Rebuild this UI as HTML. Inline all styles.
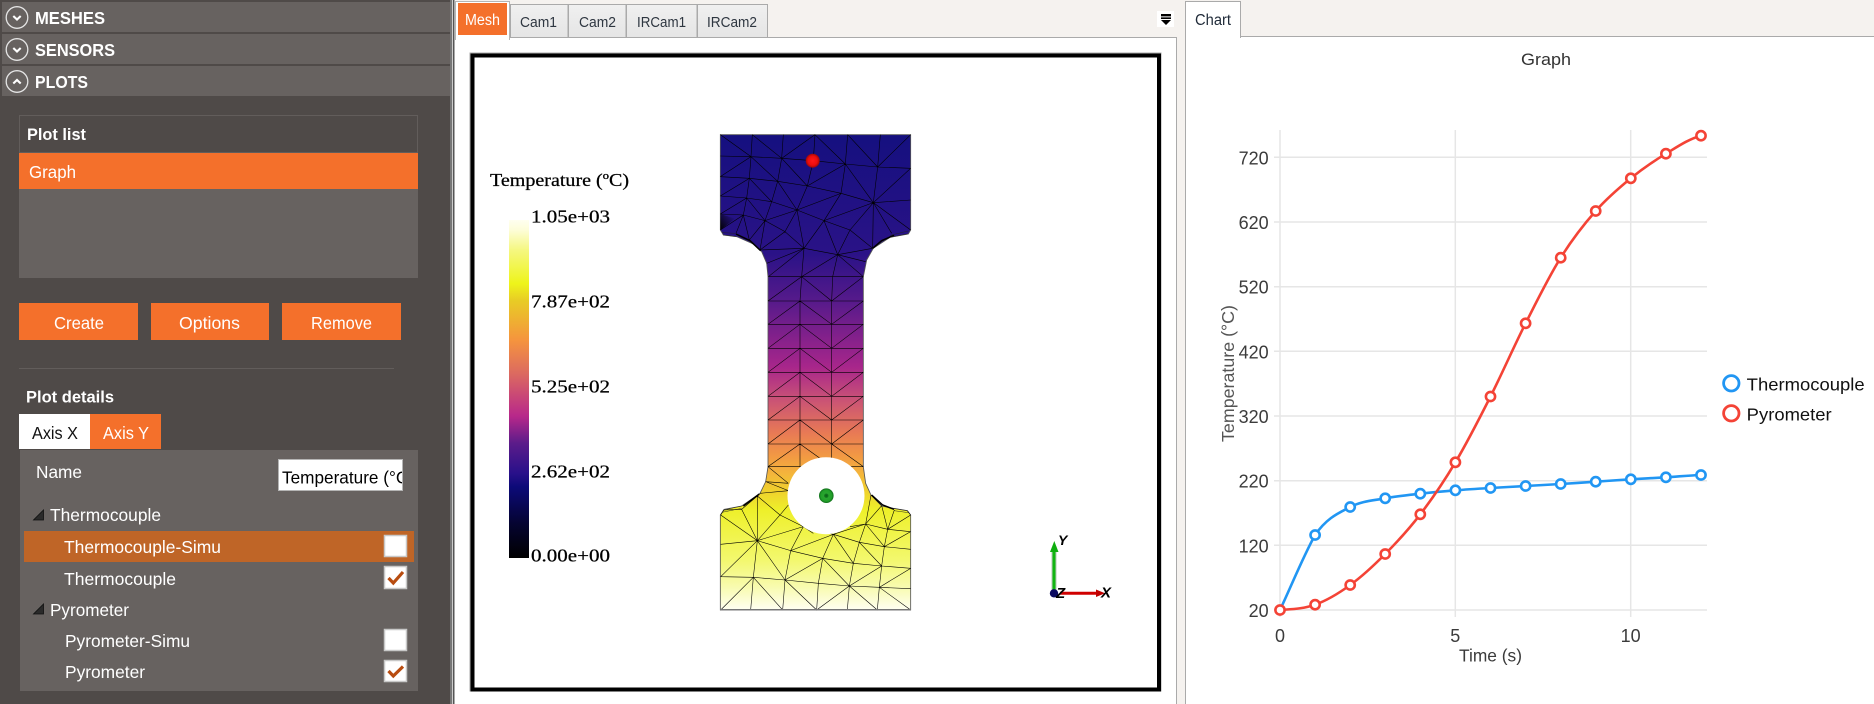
<!DOCTYPE html>
<html><head><meta charset="utf-8"><title>Plots</title>
<style>
html,body{margin:0;padding:0;background:#fff;width:1874px;height:704px;overflow:hidden}
svg{display:block}
text{font-family:"Liberation Sans",sans-serif}
.w{fill:#fff;font-size:17.5px}
.h{fill:#fff;font-size:17.5px;font-weight:bold}
.t{fill:#2e3640;font-size:15px}
.s{font-family:"Liberation Serif",serif;fill:#000;font-size:18px;stroke:#000;stroke-width:.25px}
.a{fill:#3b3b3b;font-size:18px}
</style></head><body>
<svg width="1874" height="704" viewBox="0 0 1874 704" xmlns="http://www.w3.org/2000/svg">
<defs>
<linearGradient id="mesh" gradientUnits="userSpaceOnUse" x1="0" y1="44" x2="0" y2="1470">
<stop offset="0" stop-color="#15107f"/><stop offset=".25" stop-color="#2a1287"/><stop offset=".348" stop-color="#551a8b"/><stop offset=".489" stop-color="#a8268b"/><stop offset=".552" stop-color="#c74f78"/><stop offset=".628" stop-color="#e87a55"/><stop offset=".678" stop-color="#f29a43"/><stop offset=".712" stop-color="#f4b43c"/><stop offset=".748" stop-color="#efcf2d"/><stop offset=".79" stop-color="#eef02a"/><stop offset=".895" stop-color="#f3f86e"/><stop offset=".952" stop-color="#f8fbb0"/><stop offset="1" stop-color="#fffff2"/>
</linearGradient>
<linearGradient id="cb" x1="0" y1="0" x2="0" y2="1">
<stop offset="0" stop-color="#fffff0"/><stop offset=".03" stop-color="#fdfdd8"/><stop offset=".09" stop-color="#f5f77f"/><stop offset=".188" stop-color="#eef41a"/><stop offset=".238" stop-color="#e8cc25"/><stop offset=".356" stop-color="#f5943e"/><stop offset=".454" stop-color="#dc6a60"/><stop offset=".58" stop-color="#b8288a"/><stop offset=".66" stop-color="#5c1c8a"/><stop offset=".75" stop-color="#28108a"/><stop offset=".79" stop-color="#0c0a78"/><stop offset=".9" stop-color="#050430"/><stop offset="1" stop-color="#000"/>
</linearGradient>
<linearGradient id="dk" gradientUnits="userSpaceOnUse" x1="61" y1="330" x2="105" y2="292">
<stop offset="0" stop-color="#000"/><stop offset="1" stop-color="#000" stop-opacity="0"/>
</linearGradient>
<linearGradient id="tb" x1="0" y1="0" x2="0" y2="1"><stop offset="0" stop-color="#f0f0f0"/><stop offset="1" stop-color="#e5e5e5"/></linearGradient>
<radialGradient id="rs"><stop offset="0" stop-color="#ff1818"/><stop offset=".65" stop-color="#ee0d0d"/><stop offset="1" stop-color="#9c0808"/></radialGradient>
<radialGradient id="gs"><stop offset="0" stop-color="#0c5a18"/><stop offset=".25" stop-color="#127a1e"/><stop offset=".35" stop-color="#2aa52f"/><stop offset=".75" stop-color="#22a02a"/><stop offset="1" stop-color="#0e6a18"/></radialGradient>
<clipPath id="ic"><rect x="279" y="460" width="123" height="30"/></clipPath>
</defs>

<!-- left panel -->
<rect x="0" y="0" width="450" height="704" fill="#4f4a48"/>
<rect x="2" y="2" width="448" height="30" fill="#676260"/>
<rect x="2" y="34" width="448" height="30" fill="#676260"/>
<rect x="2" y="66" width="448" height="30" fill="#676260"/>
<g fill="none" stroke="#e4e4e4" stroke-width="1.3">
<circle cx="17" cy="17.5" r="10.8"/><circle cx="17" cy="49.5" r="10.8"/><circle cx="17" cy="81.5" r="10.8"/>
</g>
<g fill="none" stroke="#fff" stroke-width="2.1">
<path d="M13.3 16L17 19.5L20.7 16"/><path d="M13.3 48L17 51.5L20.7 48"/><path d="M13.3 83.5L17 80L20.7 83.5"/>
</g>
<text class="h" x="35" y="24" textLength="70" lengthAdjust="spacingAndGlyphs">MESHES</text>
<text class="h" x="35" y="56" textLength="80" lengthAdjust="spacingAndGlyphs">SENSORS</text>
<text class="h" x="35" y="88" textLength="53" lengthAdjust="spacingAndGlyphs">PLOTS</text>

<rect x="19.5" y="115.5" width="398" height="37" fill="#4f4a48" stroke="#625d5b"/>
<text class="h" x="27" y="140" textLength="59" lengthAdjust="spacingAndGlyphs" style="font-size:17px">Plot list</text>
<rect x="19" y="153" width="399" height="125" fill="#676260"/>
<rect x="19" y="153" width="399" height="36" fill="#f4702b"/>
<text class="w" x="29" y="178" textLength="47" lengthAdjust="spacingAndGlyphs">Graph</text>
<rect x="19" y="303" width="119" height="37" fill="#f4702b"/>
<rect x="151" y="303" width="118" height="37" fill="#f4702b"/>
<rect x="282" y="303" width="119" height="37" fill="#f4702b"/>
<text class="w" x="54" y="329" textLength="50" lengthAdjust="spacingAndGlyphs">Create</text>
<text class="w" x="179" y="329" textLength="61" lengthAdjust="spacingAndGlyphs">Options</text>
<text class="w" x="311" y="329" textLength="61" lengthAdjust="spacingAndGlyphs">Remove</text>
<rect x="19" y="368" width="375" height="1" fill="#625d5b"/>
<text class="h" x="26" y="402.5" textLength="88" lengthAdjust="spacingAndGlyphs" style="font-size:17px">Plot details</text>
<rect x="19" y="414" width="71" height="35" fill="#fff"/>
<rect x="90" y="414" width="71" height="35" fill="#f4702b"/>
<text x="32" y="439" class="w" style="fill:#111" textLength="46" lengthAdjust="spacingAndGlyphs">Axis X</text>
<text x="103" y="439" class="w" textLength="46" lengthAdjust="spacingAndGlyphs">Axis Y</text>
<rect x="20" y="450" width="398" height="241" fill="#676260"/>
<text class="w" x="36" y="478" textLength="46" lengthAdjust="spacingAndGlyphs">Name</text>
<rect x="278.5" y="459.5" width="124" height="31" fill="#fff" stroke="#b5b5b5"/>
<g clip-path="url(#ic)"><text x="282" y="483.5" style="fill:#000;font-size:17.5px" textLength="132" lengthAdjust="spacingAndGlyphs">Temperature (°C)</text></g>
<path d="M33.5 520H43.5V510Z" fill="#2a2a2a" stroke="#111" stroke-width=".8"/>
<text class="w" x="50" y="521" textLength="111" lengthAdjust="spacingAndGlyphs">Thermocouple</text>
<rect x="24" y="531" width="390" height="31" fill="#bf6527"/>
<text class="w" x="64" y="553" textLength="157" lengthAdjust="spacingAndGlyphs">Thermocouple-Simu</text>
<text class="w" x="64" y="585" textLength="112" lengthAdjust="spacingAndGlyphs">Thermocouple</text>
<path d="M33.5 614H43.5V604Z" fill="#2a2a2a" stroke="#111" stroke-width=".8"/>
<text class="w" x="50" y="616" textLength="79" lengthAdjust="spacingAndGlyphs">Pyrometer</text>
<text class="w" x="65" y="647" textLength="125" lengthAdjust="spacingAndGlyphs">Pyrometer-Simu</text>
<text class="w" x="65" y="678" textLength="80" lengthAdjust="spacingAndGlyphs">Pyrometer</text>
<g fill="#fff" stroke="#c8c8c8" stroke-width="1.5">
<rect x="384.5" y="535.5" width="22" height="21"/><rect x="384.5" y="566.5" width="22" height="22"/>
<rect x="384.5" y="629.5" width="22" height="21"/><rect x="384.5" y="660.5" width="22" height="21"/>
</g>
<g fill="none" stroke="#b84c10" stroke-width="3.2">
<path d="M388.5 578L393.3 583L403 572"/><path d="M388.5 671L393.3 676L403 666.5"/>
</g>
<!-- splitter -->
<rect x="450" y="0" width="2" height="704" fill="#777"/><rect x="452" y="0" width="1" height="704" fill="#ccc"/><rect x="453" y="0" width="1" height="704" fill="#555"/><rect x="454" y="0" width="1" height="704" fill="#aaa"/>

<!-- center -->
<rect x="455" y="0" width="731" height="37" fill="#f5f2ef"/>
<rect x="455" y="37" width="721" height="667" fill="#fff"/>
<rect x="1177" y="37" width="9" height="667" fill="#f5f2ef"/>
<rect x="509" y="37" width="668" height="1" fill="#aaa"/>
<rect x="1176" y="37" width="1" height="667" fill="#aaa"/>
<path d="M455.5 40V1.5H509.5V40" fill="#fff" stroke="#b5b5b5"/>
<rect x="458" y="3" width="49" height="32" fill="#f4702b"/>
<text x="465" y="25" style="fill:#fff;font-size:15.5px" textLength="35" lengthAdjust="spacingAndGlyphs">Mesh</text>
<g fill="url(#tb)" stroke="#aaa">
<rect x="510.5" y="4.5" width="57.5" height="33"/><rect x="568.5" y="4.5" width="57.5" height="33"/>
<rect x="626.5" y="4.5" width="70.5" height="33"/><rect x="697.5" y="4.5" width="70" height="33"/>
</g>
<text class="t" x="520" y="27" textLength="37" lengthAdjust="spacingAndGlyphs">Cam1</text>
<text class="t" x="579" y="27" textLength="37" lengthAdjust="spacingAndGlyphs">Cam2</text>
<text class="t" x="637" y="27" textLength="49" lengthAdjust="spacingAndGlyphs">IRCam1</text>
<text class="t" x="707" y="27" textLength="50" lengthAdjust="spacingAndGlyphs">IRCam2</text>
<rect x="1157" y="11" width="17" height="16" fill="#fff"/>
<path d="M1161 14h10v2.4h-10zM1161 17.4h10v1.6h-10zM1161 20h10l-5 5z" fill="#000"/>

<rect x="470" y="53" width="691" height="638" fill="none" stroke="#aaa" stroke-width="1"/>
<rect x="472.5" y="55.5" width="686.5" height="634" fill="#fff" stroke="#000" stroke-width="4"/>

<!-- legend/colorbar -->
<text x="490" y="186" style="font-family:'Liberation Serif',serif;fill:#000;stroke:#000;stroke-width:.25px;font-size:18px" textLength="139" lengthAdjust="spacingAndGlyphs">Temperature (ºC)</text>
<rect x="509" y="220" width="20" height="338" fill="url(#cb)"/>
<text class="s" x="531" y="222.7" textLength="79" lengthAdjust="spacingAndGlyphs">1.05e+03</text>
<text class="s" x="531" y="307.7" textLength="79" lengthAdjust="spacingAndGlyphs">7.87e+02</text>
<text class="s" x="531" y="392.7" textLength="79" lengthAdjust="spacingAndGlyphs">5.25e+02</text>
<text class="s" x="531" y="477.7" textLength="79" lengthAdjust="spacingAndGlyphs">2.62e+02</text>
<text class="s" x="531" y="561.7" textLength="79" lengthAdjust="spacingAndGlyphs">0.00e+00</text>

<!-- mesh -->
<g transform="translate(700,120) scale(.33333)">
<path d="M61 44H632V330L625 342L570 352L520 385L500 420L490 470V1040L497 1090L513 1125L545 1158L580 1165L622 1172L632 1185V1470H61V1185L72 1168L125 1158L180 1120L197 1085L204 1040V470L200 430L185 395L160 372L110 350L70 345L61 330Z" fill="url(#mesh)" stroke="#555" stroke-width="2.5"/>
<path d="M61 282L61 330L105 296Z" fill="url(#dk)"/>
<path fill="none" stroke="#000" stroke-width="1.7" d="M61 44L153 110M157 44L153 110M157 44L245 115M250 44L245 115M345 44L245 115M345 44L340 122M345 44L436 132M443 44L436 132M443 44L533 141M541 44L533 141M632 44L533 141M61 108L153 110L245 115L340 122L436 132L533 141L632 145M61 170L153 110M153 110L148 175M153 110L233 184M245 115L233 184M245 115L322 198M340 122L322 198M436 132L322 198M436 132L423 220M436 132L520 248M533 141L520 248M632 145L520 248M61 170L148 175L233 184L322 198L423 220L520 248L632 240M61 228L148 175M148 175L140 234M148 175L215 245M233 184L215 245M233 184L291 270M322 198L291 270M423 220L291 270M423 220L372 302M520 248L372 302M520 248L450 330M520 248L518 385M520 248L575 340M520 248L632 330M61 228L140 234L215 245L291 270L372 302L450 330L518 385M61 282L140 234M140 234L130 285M140 234L195 302M215 245L195 302M291 270L195 302M291 270L255 335M291 270L312 385M372 302L312 385M372 302L413 404M450 330L413 404M518 385L413 404M61 282L130 285M61 330L130 285M130 285L108 340M130 285L148 360M130 285L195 302M195 302L148 360M195 302L180 390M195 302L255 335M255 335L180 390M255 335L312 385M180 390L312 385M312 385L413 404M312 385L200 430M312 385L205 470M312 385L305 470M413 404L305 470M413 404L398 470M413 404L490 470M413 404L497 425M205 470H490M305 470L300 543M398 470L395 543M204 543H490M204 613H490M204 685H490M204 757H490M204 829H490M204 900H490M204 972H490M300 543V1040M395 543V1040M204 543L305 470M305 470L395 543M395 543L490 470M204 613L300 543M300 543L395 613M395 613L490 543M204 685L300 613M300 613L395 685M395 685L490 613M204 757L300 685M300 685L395 757M395 757L490 685M204 829L300 757M300 757L395 829M395 829L490 757M204 900L300 829M300 829L395 900M395 900L490 829M204 972L300 900M300 900L395 972M395 972L490 900M204 1040L300 972M300 972L395 1040M395 972L490 1040M204 1040H490"/>
<path fill="none" stroke="#000" stroke-width="4.5" d="M108 342L150 362L182 392M518 385L545 362L582 346"/>
<path fill="none" stroke="#222" stroke-width="1.4" d="M66 338L108 340M70 345L110 350M625 333L570 346M622 342L570 352"/>
</g>
<g transform="translate(700,300) scale(.33333)">
<path fill="none" stroke="#000" stroke-width="1.7" d="M204 500L265 550M197 545L265 550M197 545L265 572M180 580L265 572M172 588L240 645M172 588L172 722M240 645L172 722M172 588L125 628M72 630L125 628M62 645L172 722M125 628L172 722M240 645L265 615M240 645L310 680M172 722L310 680M172 722L272 752M272 752L400 703M310 680L272 752M310 680L340 700M62 733L172 722M62 830L172 722M172 722L160 832M172 722L255 840M272 752L255 840M272 752L368 775M255 840L368 775M400 703L368 775M400 703L460 790M400 703L478 727M400 703L497 672M497 672L478 727M478 727L460 790M478 727L553 740M497 672L553 740M497 672L563 688M497 672L513 585M497 672L545 617M563 688L553 740M563 688L632 645M563 688L632 695M553 740L632 695M553 740L632 748M553 740L545 798M460 790L545 798M478 727L545 798M368 775L460 790M368 775L448 858M368 775L355 850M460 790L448 858M545 798L448 858M545 798L538 862M632 805L545 798M632 805L538 862M538 862L632 866M538 862L632 930M538 862L532 930M448 858L538 862M448 858L442 930M448 858L532 930M448 858L350 930M355 850L448 858M355 850L350 930M255 840L355 850M255 840L350 930M255 840L248 930M160 832L255 840M160 832L248 930M160 832L152 930M160 832L62 930M62 830L160 832M545 617L563 688M583 630L563 688M513 585L545 617M400 703L335 690M497 672L450 680M72 630L62 645M622 632L632 645"/>
<path fill="none" stroke="#000" stroke-width="4.5" d="M130 618L178 582M515 585L548 615L582 628"/>
<path fill="none" stroke="#222" stroke-width="1.4" d="M72 630L125 618M66 637L125 625M580 625L622 632M582 632L625 638"/>
</g>
<rect x="720" y="609" width="191" height="1.2" fill="#777"/>
<circle cx="826" cy="495.7" r="38.5" fill="#fff"/>
<circle cx="826.3" cy="495.7" r="7.3" fill="url(#gs)"/>
<circle cx="812.7" cy="160.7" r="7" fill="url(#rs)"/>

<!-- triad -->
<path d="M1054 593V551" stroke="#b5c7b5" stroke-width="5" fill="none"/>
<path d="M1054 593V551" stroke="#11b511" stroke-width="3" fill="none"/>
<path d="M1054.3 541L1058.5 552H1050Z" fill="#0fae0f"/>
<path d="M1060 593.3H1097" stroke="#d00000" stroke-width="3" fill="none"/>
<path d="M1105 593.3L1096 589.5V597Z" fill="#c00000"/>
<circle cx="1054" cy="593.3" r="4.2" fill="#0a0a60"/>
<g style="font-style:italic;font-weight:bold;fill:#000">
<text x="1058" y="545" style="font-size:14px">Y</text>
<text x="1101" y="597.5" style="font-size:15px">X</text>
<text x="1056" y="598" style="font-size:15px">Z</text>
</g>

<!-- chart -->
<rect x="1186" y="37" width="688" height="667" fill="#fff"/>
<rect x="1186" y="0" width="688" height="36" fill="#f5f2ef"/>
<rect x="1240" y="36" width="634" height="1" fill="#aaa"/>
<rect x="1185" y="37" width="1" height="667" fill="#aaa"/>
<path d="M1185.5 38V1.5H1240.5V38" fill="#fff" stroke="#aaa"/>
<text x="1195" y="25" style="fill:#1f2a38;font-size:15.5px" textLength="36" lengthAdjust="spacingAndGlyphs">Chart</text>
<text x="1521" y="65" style="fill:#333;font-size:17px" textLength="50" lengthAdjust="spacingAndGlyphs">Graph</text>

<g stroke="#e6e6e6" stroke-width="1.5" fill="none">
<path d="M1274 157.3H1707M1274 222H1707M1274 286.7H1707M1274 351.3H1707M1274 416H1707M1274 480.7H1707M1274 545.3H1707M1274 610H1707"/>
<path d="M1280 130V617M1455.3 130V617M1630.7 130V617"/>
</g>
<g class="a" text-anchor="end">
<text class="a" x="1268.7" y="164.5">720</text><text class="a" x="1268.7" y="229">620</text><text class="a" x="1268.7" y="293.7">520</text><text class="a" x="1268.7" y="358.3">420</text><text class="a" x="1268.7" y="423">320</text><text class="a" x="1268.7" y="487.7">220</text><text class="a" x="1268.7" y="552.3">120</text><text class="a" x="1268.7" y="617">20</text>
</g>
<g text-anchor="middle">
<text class="a" x="1280" y="642">0</text><text class="a" x="1455.3" y="642">5</text><text class="a" x="1630.7" y="642">10</text>
</g>
<text x="1459" y="661.7" style="fill:#3b3b3b;font-size:17.5px" textLength="63" lengthAdjust="spacingAndGlyphs">Time (s)</text>
<text transform="translate(1234,442) rotate(-90)" x="0" y="0" style="fill:#555;font-size:17.5px" textLength="137" lengthAdjust="spacingAndGlyphs">Temperature (°C)</text>

<path fill="none" stroke="#2196f3" stroke-width="2.6" d="M1280 610C1291.7 585 1303.4 556 1315.1 535C1326.8 517.8 1338.5 513.1 1350.2 507C1361.9 500.9 1373.5 500.5 1385.2 498.3C1396.9 496.1 1408.6 495 1420.3 493.7C1432 492.4 1443.7 491.3 1455.4 490.3C1467.1 489.4 1478.8 488.7 1490.5 488C1502.2 487.3 1513.9 486.7 1525.6 486C1537.3 485.3 1549 484.7 1560.7 484C1572.4 483.3 1584 482.5 1595.7 481.7C1607.4 480.9 1619.1 480 1630.8 479.3C1642.5 478.6 1654.2 478 1665.9 477.3C1677.6 476.6 1689.3 475.4 1701 475"/>
<g fill="#fff" stroke="#2196f3" stroke-width="2.6">
<circle cx="1315.1" cy="535" r="4.6"/><circle cx="1350.2" cy="507" r="4.6"/><circle cx="1385.2" cy="498.3" r="4.6"/><circle cx="1420.3" cy="493.7" r="4.6"/><circle cx="1455.4" cy="490.3" r="4.6"/><circle cx="1490.5" cy="488" r="4.6"/><circle cx="1525.6" cy="486" r="4.6"/><circle cx="1560.7" cy="484" r="4.6"/><circle cx="1595.7" cy="481.7" r="4.6"/><circle cx="1630.8" cy="479.3" r="4.6"/><circle cx="1665.9" cy="477.3" r="4.6"/><circle cx="1701" cy="475" r="4.6"/>
</g>
<path fill="none" stroke="#f44336" stroke-width="2.6" d="M1280 610C1291.7 609.1 1303.4 608.9 1315.1 604.7C1326.8 600.5 1338.5 593.5 1350.2 585C1361.9 576.6 1373.5 565.8 1385.2 554C1396.9 542.2 1408.6 529.6 1420.3 514.3C1432 499 1443.7 481.9 1455.4 462.3C1467.1 442.7 1478.8 419.7 1490.5 396.5C1502.2 373.3 1513.9 346.4 1525.6 323.3C1537.3 300.2 1549 276.4 1560.7 257.7C1572.4 239 1584 224.2 1595.7 211C1607.4 197.8 1619.1 187.9 1630.8 178.3C1642.5 168.8 1654.2 160.8 1665.9 153.7C1677.6 146.6 1689.3 138.7 1701 135.7"/>
<g fill="#fff" stroke="#f44336" stroke-width="2.6">
<circle cx="1280" cy="610" r="4.6"/><circle cx="1315.1" cy="604.7" r="4.6"/><circle cx="1350.2" cy="585" r="4.6"/><circle cx="1385.2" cy="554" r="4.6"/><circle cx="1420.3" cy="514.3" r="4.6"/><circle cx="1455.4" cy="462.3" r="4.6"/><circle cx="1490.5" cy="396.5" r="4.6"/><circle cx="1525.6" cy="323.3" r="4.6"/><circle cx="1560.7" cy="257.7" r="4.6"/><circle cx="1595.7" cy="211" r="4.6"/><circle cx="1630.8" cy="178.3" r="4.6"/><circle cx="1665.9" cy="153.7" r="4.6"/><circle cx="1701" cy="135.7" r="4.6"/>
</g>
<circle cx="1731.3" cy="383.3" r="7.7" fill="#fff" stroke="#2196f3" stroke-width="2.8"/>
<circle cx="1731.3" cy="413.3" r="7.7" fill="#fff" stroke="#f44336" stroke-width="2.8"/>
<text x="1746.7" y="390.5" style="fill:#111;font-size:17.5px" textLength="118" lengthAdjust="spacingAndGlyphs">Thermocouple</text>
<text x="1746.7" y="420.5" style="fill:#111;font-size:17.5px" textLength="85" lengthAdjust="spacingAndGlyphs">Pyrometer</text>
</svg>
</body></html>
